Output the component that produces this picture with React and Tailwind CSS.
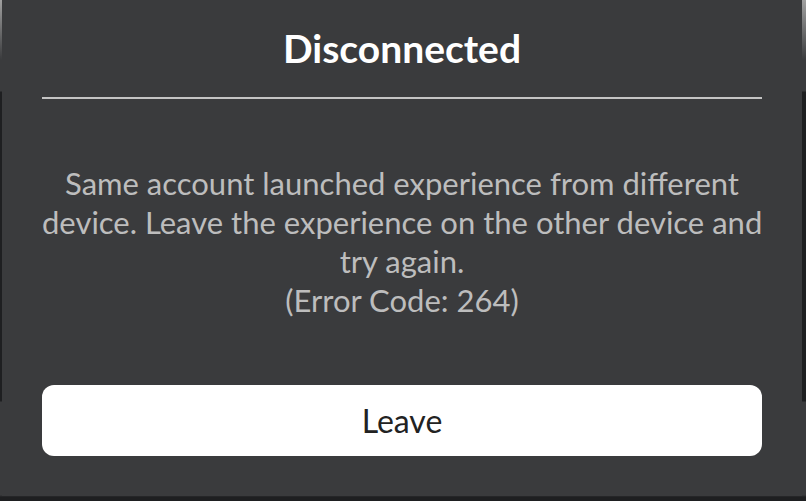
export default function App() {
  return (
    <div
      className="w-[806px] h-[501px] overflow-hidden bg-[linear-gradient(to_bottom,#a0a0a0_0px,#3a3b3d_60px,#3a3b3d_91px,#1e1f21_92px,#1e1f21_401px,#3a3b3d_402px,#3a3b3d_495px,#1e1f21_497px)]"
      style={{ fontFamily: 'Lato, "Noto Sans", sans-serif' }}
    >
      <div className="ml-[2px] mr-[4px] h-[496px] bg-[#3a3b3d] px-[40px] flex flex-col">
        <div className="h-[97px] flex items-center justify-center">
          <h1 className="text-[39px] font-bold text-white leading-none">Disconnected</h1>
        </div>
        <div className="h-[2px] bg-[#c4c4c4]" />
        <div className="mt-[65px] text-center text-[31px] leading-[39px] text-[#bdbdbd] whitespace-nowrap">
          <p>
            Same account launched experience from different
            <br />
            device. Leave the experience on the other device and
            <br />
            try again.
          </p>
          <p>(Error Code: 264)</p>
        </div>
        <button className="mt-[65px] h-[71px] w-full rounded-[12px] bg-white text-[32px] text-[#222222] flex items-center justify-center">
          Leave
        </button>
      </div>
    </div>
  );
}
